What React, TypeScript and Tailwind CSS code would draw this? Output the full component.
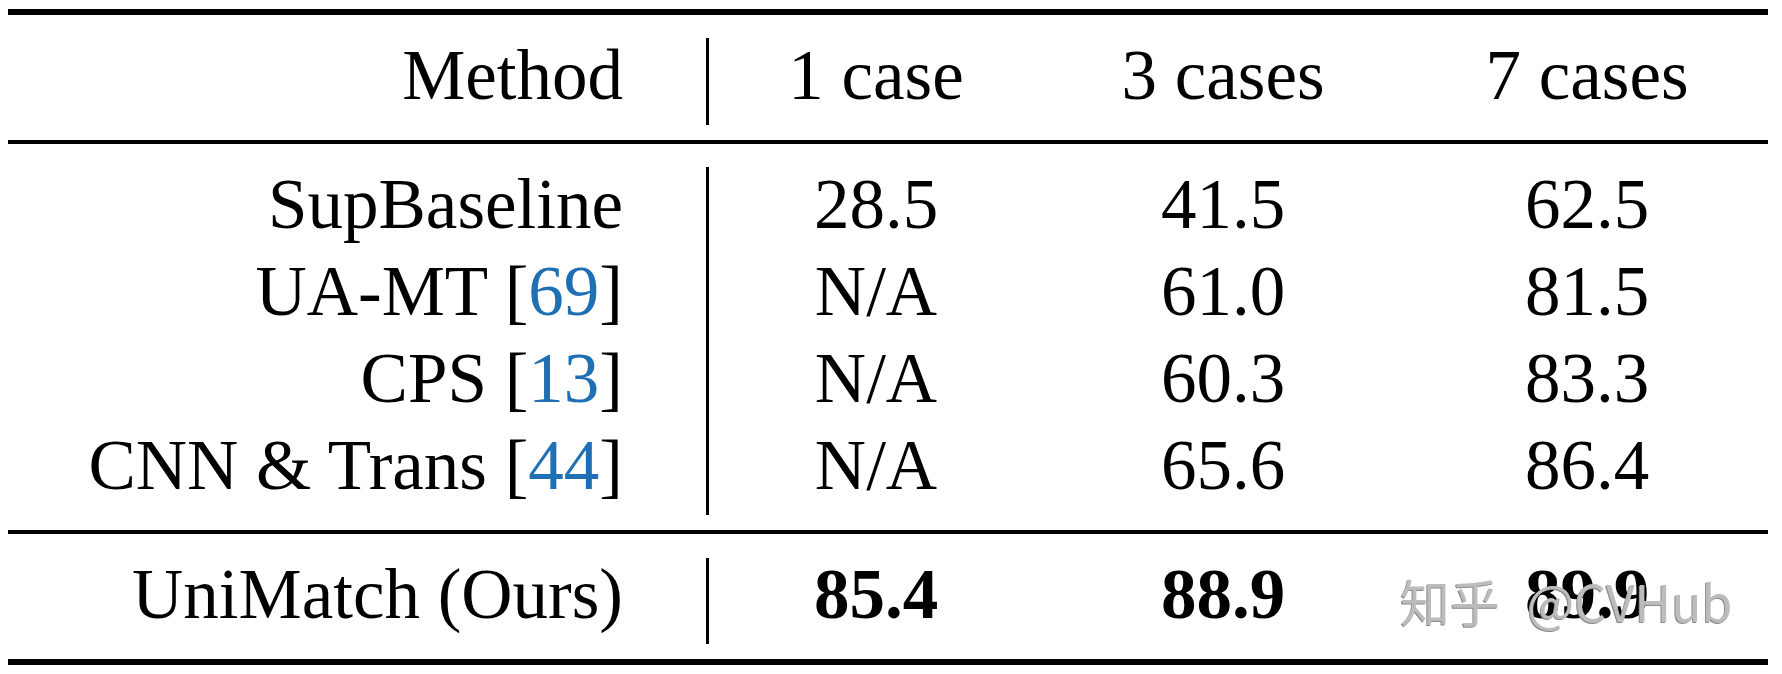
import React from "react";

const serif = { fontFamily: '"Liberation Serif", "Times New Roman", serif' };

function Cite({ n }: { n: string }) {
  return (
    <>
      [<span className="text-[#1f6fb5]">{n}</span>]
    </>
  );
}

type Row = { method: React.ReactNode; a: string; b: string; c: string };

const body: Row[] = [
  { method: "SupBaseline", a: "28.5", b: "41.5", c: "62.5" },
  { method: <>UA-MT <Cite n="69" /></>, a: "N/A", b: "61.0", c: "81.5" },
  { method: <>CPS <Cite n="13" /></>, a: "N/A", b: "60.3", c: "83.3" },
  { method: <>CNN &amp; Trans <Cite n="44" /></>, a: "N/A", b: "65.6", c: "86.4" },
];

function Section({ rows, bold = false, lastMt = false }: { rows: Row[]; bold?: boolean; lastMt?: boolean }) {
  return (
    <div className="flex text-[71px] leading-[87px] text-black">
      <div className="w-[698px] pr-[83px] pt-[17px] pb-[21px] text-right whitespace-nowrap">
        {rows.map((r, i) => (
          <div key={i}>{r.method}</div>
        ))}
      </div>
      <div className={`w-[3px] bg-black mb-[15px] ${lastMt ? "mt-[24px]" : "mt-[23px]"}`} />
      <div className={`w-[334px] pt-[17px] pb-[21px] text-center whitespace-nowrap ${bold ? "font-bold" : ""}`}>
        {rows.map((r, i) => (
          <div key={i}>{r.a}</div>
        ))}
      </div>
      <div className={`w-[360px] pt-[17px] pb-[21px] text-center whitespace-nowrap ${bold ? "font-bold" : ""}`}>
        {rows.map((r, i) => (
          <div key={i}>{r.b}</div>
        ))}
      </div>
      <div className={`w-[365px] pl-[3px] pt-[17px] pb-[21px] text-center whitespace-nowrap ${bold ? "font-bold" : ""}`}>
        {rows.map((r, i) => (
          <div key={i}>{r.c}</div>
        ))}
      </div>
    </div>
  );
}

export default function App() {
  return (
    <div className="relative w-[1782px] h-[674px] bg-white overflow-hidden" style={serif}>
      <div className="pl-[8px] pt-[9px] w-[1768px]">
        <div className="h-[6px] bg-black" />
        <Section rows={[{ method: "Method", a: "1 case", b: "3 cases", c: "7 cases" }]} />
        <div className="h-[4px] bg-black" />
        <Section rows={body} />
        <div className="h-[4px] bg-black" />
        <Section rows={[{ method: "UniMatch (Ours)", a: "85.4", b: "88.9", c: "89.9" }]} bold lastMt />
        <div className="h-[6px] bg-black" />
      </div>
      <div
        className="absolute left-[1400px] top-[575px] flex text-[50px] leading-[50px] text-[#bcbcbc] whitespace-nowrap [text-shadow:-1px_1px_0_#8a8a8a]"
        style={{ fontFamily: '"Noto Sans CJK SC", "Noto Sans", sans-serif' }}
      >
        <span>知乎</span>
        <span className="ml-[27px]">@CVHub</span>
      </div>
    </div>
  );
}
